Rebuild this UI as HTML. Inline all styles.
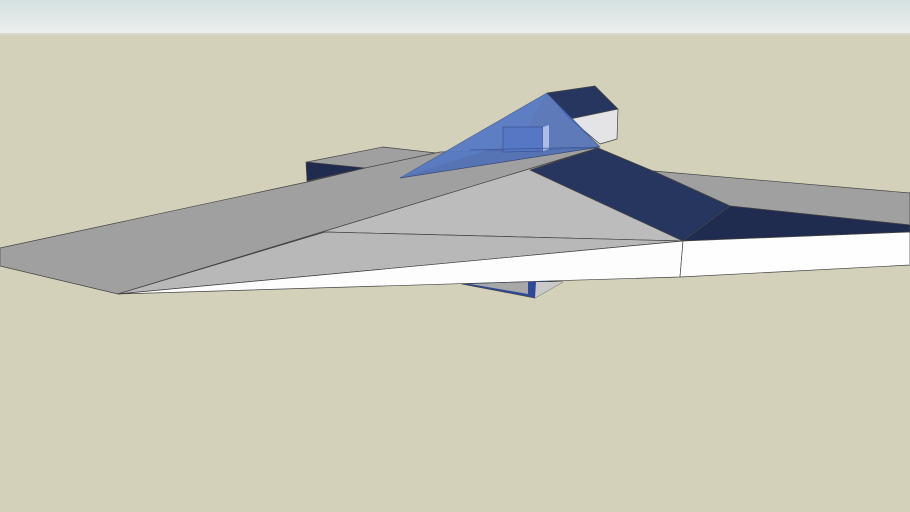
<!DOCTYPE html>
<html><head><meta charset="utf-8"><style>
html,body{margin:0;padding:0;width:910px;height:512px;overflow:hidden;background:#d3d1b9}
svg{display:block}
</style></head><body>
<svg width="910" height="512" viewBox="0 0 910 512" xmlns="http://www.w3.org/2000/svg">
<defs><linearGradient id="sky" x1="0" y1="0" x2="0" y2="1"><stop offset="0" stop-color="#d4e0e0"/><stop offset="1" stop-color="#eef0ee"/></linearGradient></defs>
<rect x="0" y="0" width="910" height="34" fill="url(#sky)"/>
<rect x="0" y="33" width="910" height="2" fill="#d9d8cc"/>
<rect x="0" y="35" width="910" height="477" fill="#d3d1b9"/>
<g stroke="#444" stroke-width="0.7" stroke-linejoin="round">
<polygon points="462,284 535,298 563,282 520,280" fill="#2d4a9a"/>
<polygon points="470,284 528,294 528,282" fill="#a8a8a8" stroke="none"/>
<polygon points="535,298 563,282 536,282" fill="#c9c9c9" stroke="none"/>
<polygon points="653,171 910,193 910,225 730,206" fill="#a0a0a0"/>
<polygon points="683,241 730,206 910,225 910,232" fill="#1f2b4f"/>
<polygon points="530,170 598,148 653,171 730,206 683,241" fill="#27365e"/>
<polygon points="307,162 383,147 445,154 360,176 307,181" fill="#a0a0a0"/>
<polygon points="306,162 365,168 307,181" fill="#1f2b4f"/>
<polygon points="0,248 307,182 365,168 440,152 598,148 118,294 0,266" fill="#a0a0a0"/>
<polygon points="118,294 598,148 530,170 683,241 325,232" fill="#bcbcbc"/>
<polygon points="118,294 325,232 683,241" fill="#b8b8b8"/>
<polygon points="118,294 683,241 680,277" fill="#fdfdfd"/>
<polygon points="683,241 910,232 910,265 680,277" fill="#fefefe"/>
<polygon points="547,93 595,86 618,109 570,119" fill="#27365e"/>
<polygon points="570,119 618,109 617,139 600,144" fill="#e4e4e6"/>
<polygon points="400,178 547,93 600,147" fill="#4a6cb8" stroke="#2a3d70" opacity="0.85"/>
<polygon points="547,93 570,119 600,147" fill="#4566b2" stroke="none" opacity="0.85"/>
<polygon points="400,178 547,93 520,140" fill="#5d80c8" stroke="none" opacity="0.6"/>
<polygon points="503,127 543,127 543,151 503,152" fill="#5677c4" stroke="#3a5598"/>
<polygon points="543,127 549,125 549,149 543,151" fill="#a9bde6" stroke="none"/>
<polyline points="470,150 600,147" fill="none" stroke="#3a5598" stroke-width="0.7"/>
</g>
</svg>
</body></html>
